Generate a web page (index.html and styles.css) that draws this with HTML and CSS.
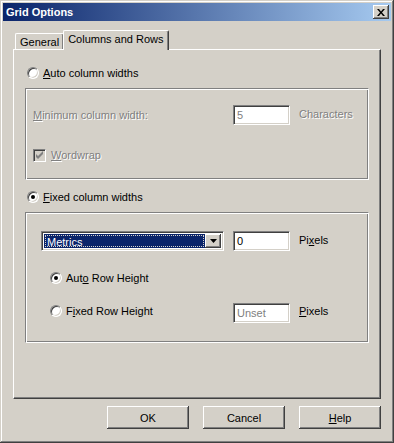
FILE: index.html
```html
<!DOCTYPE html>
<html lang="en">
<head>
    <meta charset="UTF-8">
    <title>Grid Options</title>
    <link rel="stylesheet" href="styles.css">
</head>
<body>
<div class="window">
    <div class="titlebar">
        <span class="title">Grid Options</span>
        <span class="close">
            <svg width="8" height="7" viewBox="0 0 8 7"><path d="M0 0L2 0L4 2.5L6 0L8 0L5 3.5L8 7L6 7L4 4.5L2 7L0 7L3 3.5Z" fill="#000"/></svg>
        </span>
    </div>
    <div class="tabs">
        <div class="tab">General</div>
        <div class="tab active">Columns and Rows</div>
    </div>
    <div class="panel">
        <div class="option">
            <span class="radio"></span>
            <span><u>A</u>uto column widths</span>
        </div>
        <div class="group group-auto">
            <div class="row">
                <span class="label disabled"><u>M</u>inimum column width:</span>
                <span class="field disabled-field">5</span>
                <span class="unit disabled">Characters</span>
            </div>
            <div class="check-row">
                <span class="check">
                    <svg width="9" height="9" viewBox="0 0 9 9"><path d="M1 3L3 5L8 0L8 3L3 8L1 6Z" fill="#808080"/></svg>
                </span>
                <span class="disabled"><u>W</u>ordwrap</span>
            </div>
        </div>
        <div class="option option-fixed">
            <span class="radio checked"></span>
            <span><u>F</u>ixed column widths</span>
        </div>
        <div class="group group-fixed">
            <div class="row row-select">
                <div class="select">
                    <span class="select-value"><span class="focus">Metrics</span></span>
                    <span class="select-btn">
                        <svg width="7" height="4" viewBox="0 0 7 4"><path d="M0 0L7 0L3.5 4Z" fill="#000"/></svg>
                    </span>
                </div>
                <span class="field">0</span>
                <span class="unit">Pi<u>x</u>els</span>
            </div>
            <div class="option sub auto-row">
                <span class="radio checked"></span>
                <span>Aut<u>o</u> Row Height</span>
            </div>
            <div class="row sub fixed-row">
                <div class="option inline">
                    <span class="radio"></span>
                    <span>F<u>i</u>xed Row Height</span>
                </div>
                <span class="field disabled-field">Unset</span>
                <span class="unit"><u>P</u>ixels</span>
            </div>
        </div>
    </div>
    <div class="buttons">
        <button class="btn">OK</button>
        <button class="btn">Cancel</button>
        <button class="btn"><u>H</u>elp</button>
    </div>
</div>
</body>
</html>
```

FILE: styles.css
```css
body{
    margin: 0;
    background: #d4d0c8;
    font-family: "Liberation Sans", Arial, sans-serif;
    font-size: 11px;
    color: #000;
}
.window{
    width: 394px;
    height: 443px;
    box-sizing: border-box;
    padding: 3px;
    background: #d4d0c8;
    box-shadow: inset -1px -1px #404040, inset 1px 1px #d4d0c8, inset -2px -2px #808080, inset 2px 2px #fff;
    display: flex;
    flex-direction: column;
}
.titlebar{
    height: 18px;
    background: linear-gradient(to right, #0a246a, #a6caf0);
    display: flex;
    align-items: center;
    justify-content: space-between;
    padding: 0 2px 0 2px;
}
.title{
    color: #fff;
    font-weight: bold;
    padding-left: 1px;
}
.close{
    width: 16px;
    height: 14px;
    box-sizing: border-box;
    background: #d4d0c8;
    box-shadow: inset -1px -1px #404040, inset 1px 1px #fff, inset -2px -2px #808080;
    display: flex;
    align-items: center;
    justify-content: center;
}
.tabs{
    margin: 9px 0 0 12px;
    height: 19px;
    display: flex;
    align-items: flex-end;
    z-index: 1;
}
.tab{
    height: 16px;
    box-sizing: border-box;
    padding: 0 4px;
    line-height: 17px;
    border: 1px solid #fff;
    border-bottom: none;
    border-right-color: #404040;
    border-radius: 2px 2px 0 0;
    box-shadow: inset -1px 0 #808080;
}
.tab.active{
    height: 20px;
    margin-bottom: -1px;
    margin-left: -1px;
    padding: 0 4px;
    line-height: 17px;
    background: #d4d0c8;
}
.panel{
    margin: 0 10px;
    height: 350px;
    box-sizing: border-box;
    border: 1px solid;
    border-color: #fff #404040 #404040 #fff;
    box-shadow: inset -1px -1px #808080;
    padding: 15px 11px 0 11px;
}
.option{
    display: flex;
    align-items: center;
    height: 16px;
    padding-left: 2px;
    gap: 4px;
}
.option-fixed{
    margin-top: 9px;
}
.radio{
    width: 12px;
    height: 12px;
    box-sizing: border-box;
    border-radius: 50%;
    background: #fff;
    border: 1px solid;
    border-color: #808080 #fff #fff #808080;
    box-shadow: inset 1px 1px #404040, inset -1px -1px #d4d0c8;
    display: flex;
    align-items: center;
    justify-content: center;
    flex: none;
}
.radio.checked::after{
    content: "";
    width: 4px;
    height: 4px;
    border-radius: 50%;
    background: #000;
}
.group{
    margin-top: 7px;
    box-sizing: border-box;
    border: 1px solid;
    border-color: #808080 #fff #fff #808080;
    box-shadow: inset 1px 1px #fff, inset -1px -1px #808080;
}
.group-auto{
    height: 92px;
    padding: 16px 0 0 7px;
}
.group-fixed{
    height: 131px;
    padding: 18px 0 0 15px;
}
.row{
    display: flex;
    align-items: center;
    height: 20px;
}
.label{
    width: 200px;
}
.field{
    width: 57px;
    height: 20px;
    box-sizing: border-box;
    background: #fff;
    border: 1px solid;
    border-color: #808080 #fff #fff #808080;
    box-shadow: inset 1px 1px #404040, inset -1px -1px #d4d0c8;
    padding: 0 3px;
    line-height: 18px;
    margin-right: 9px;
}
.disabled-field{
    color: #808080;
    background: #fff;
}
.disabled{
    color: #808080;
    text-shadow: 1px 1px #fff;
}
.unit{
    margin-top: -3px;
}
.check-row{
    display: flex;
    align-items: center;
    gap: 5px;
    height: 16px;
    margin-top: 22px;
}
.check{
    width: 13px;
    height: 13px;
    box-sizing: border-box;
    background: #d4d0c8;
    border: 1px solid;
    border-color: #808080 #fff #fff #808080;
    box-shadow: inset 1px 1px #404040, inset -1px -1px #d4d0c8;
    display: flex;
    align-items: center;
    justify-content: center;
}
.select{
    width: 183px;
    height: 20px;
    box-sizing: border-box;
    margin-right: 9px;
    background: #fff;
    border: 1px solid;
    border-color: #808080 #fff #fff #808080;
    box-shadow: inset 1px 1px #404040, inset -1px -1px #d4d0c8;
    padding: 2px;
    display: flex;
}
.select-value{
    flex: 1;
    background: #0a246a;
    color: #fff;
    padding: 1px;
    display: flex;
}
.focus{
    flex: 1;
    border: 1px dotted #d4d0c8;
    line-height: 12px;
    padding-left: 1px;
}
.select-btn{
    width: 16px;
    background: #d4d0c8;
    box-shadow: inset -1px -1px #404040, inset 1px 1px #fff, inset -2px -2px #808080;
    display: flex;
    align-items: center;
    justify-content: center;
}
.sub{
    padding-left: 9px;
}
.auto-row{
    margin-top: 19px;
}
.fixed-row{
    margin-top: 16px;
    height: 21px;
}
.option.inline{
    width: 183px;
    padding-left: 0;
    margin-top: -4px;
}
.buttons{
    display: flex;
    justify-content: flex-end;
    gap: 14px;
    margin: 7px 10px 0 0;
}
.btn{
    width: 82px;
    height: 23px;
    font: inherit;
    color: #000;
    background: #d4d0c8;
    border: none;
    box-shadow: inset -1px -1px #404040, inset 1px 1px #fff, inset -2px -2px #808080, inset 2px 2px #d4d0c8;
    padding: 0;
}
```
